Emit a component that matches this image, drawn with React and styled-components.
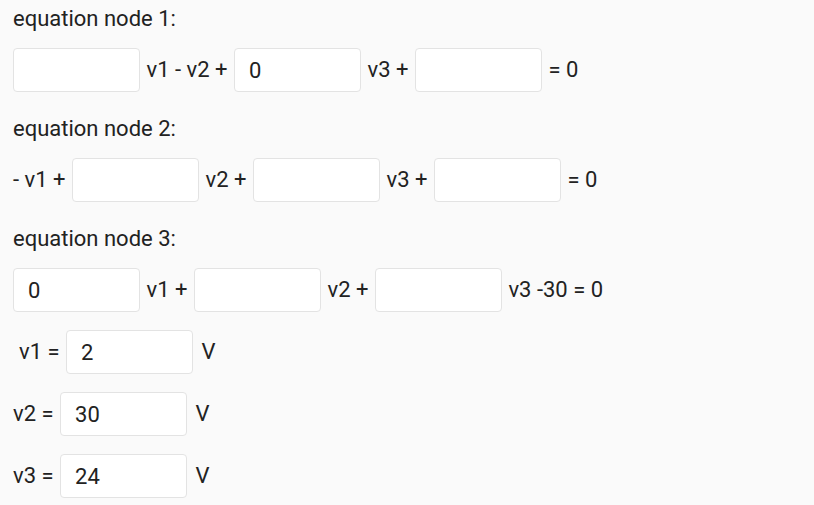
import React from 'react';
import styled, { createGlobalStyle } from 'styled-components';

const GlobalStyle = createGlobalStyle`
    html, body {
        margin: 0;
        padding: 0;
        background: #fafafa;
    }

    body {
        font-family: Roboto, "Liberation Sans", sans-serif;
        color: #222;
    }
`;

const Page = styled.main`
    display: flex;
    flex-direction: column;
    padding: 7px 13px;
    font-size: 22px;
    line-height: 24px;
`;

const Heading = styled.div`
    margin-top: ${({ first }) => (first ? '0' : '25px')};
    margin-bottom: 17px;
`;

const Row = styled.div`
    display: flex;
    align-items: center;
    gap: 6.5px;
    height: 44px;
    padding-left: ${({ indent }) => indent || 0}px;
    margin-top: ${({ spaced }) => (spaced ? '18px' : '0')};
`;

const Term = styled.span`
    white-space: pre;
    margin-left: ${({ pad }) => pad || 0}px;
`;

const Field = styled.input`
    box-sizing: border-box;
    width: 127px;
    height: 44px;
    padding: 0 14px;
    border: 1px solid #e3e3e3;
    border-radius: 4px;
    background: #fff;
    font-family: inherit;
    font-size: 22px;
    color: #222;
    outline: none;
`;

const Cell = ({ value }) => <Field type="text" defaultValue={value} />;

const App = () => {
    return (
        <>
            <GlobalStyle />
            <Page>
                <Heading first>equation node 1:</Heading>
                <Row>
                    <Cell />
                    <Term>v1 - v2 +</Term>
                    <Cell value="0" />
                    <Term>v3 +</Term>
                    <Cell />
                    <Term>= 0</Term>
                </Row>

                <Heading>equation node 2:</Heading>
                <Row>
                    <Term>- v1 +</Term>
                    <Cell />
                    <Term>v2 +</Term>
                    <Cell />
                    <Term>v3 +</Term>
                    <Cell />
                    <Term>= 0</Term>
                </Row>

                <Heading>equation node 3:</Heading>
                <Row>
                    <Cell value="0" />
                    <Term>v1 +</Term>
                    <Cell />
                    <Term>v2 +</Term>
                    <Cell />
                    <Term>v3 -30 = 0</Term>
                </Row>

                <Row spaced indent={6}>
                    <Term>v1 =</Term>
                    <Cell value="2" />
                    <Term pad={2}>V</Term>
                </Row>
                <Row spaced>
                    <Term>v2 =</Term>
                    <Cell value="30" />
                    <Term pad={2}>V</Term>
                </Row>
                <Row spaced>
                    <Term>v3 =</Term>
                    <Cell value="24" />
                    <Term pad={2}>V</Term>
                </Row>
            </Page>
        </>
    );
};

export default App;
